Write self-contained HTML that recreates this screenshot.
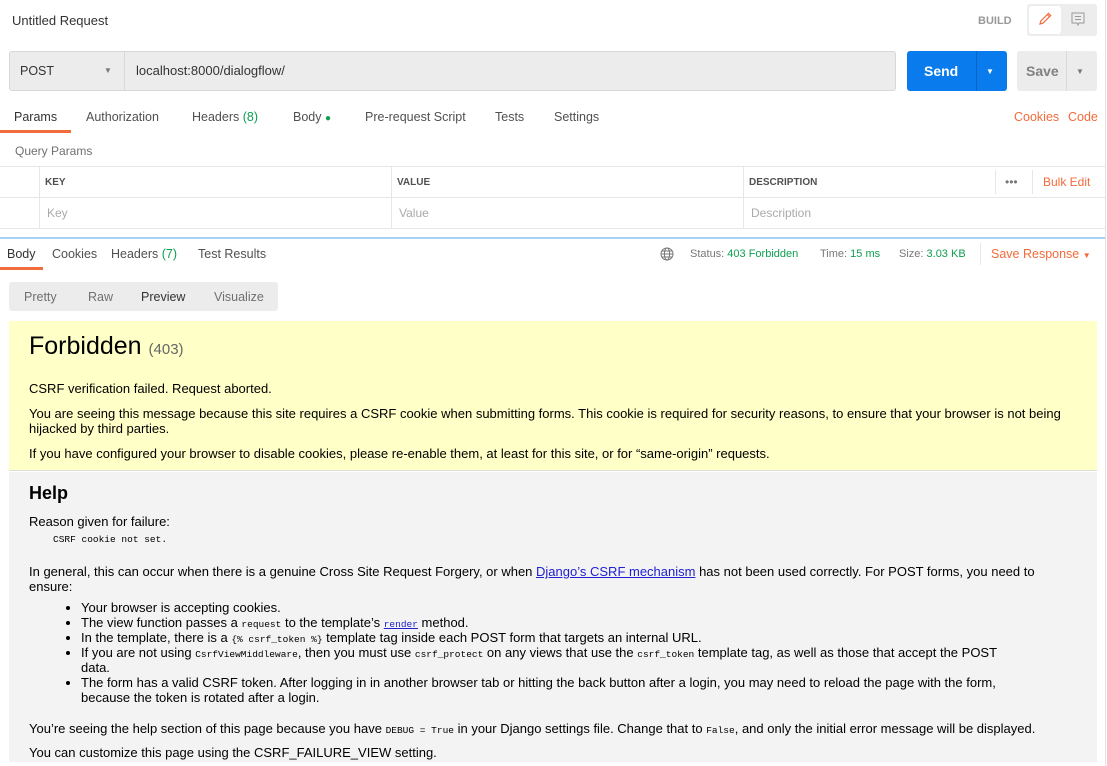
<!DOCTYPE html>
<html><head><style>
*{box-sizing:border-box;margin:0;padding:0}
body{width:1107px;height:766px;overflow:hidden;background:#fff;font-family:"Liberation Sans",sans-serif;font-size:12px;color:#505050;position:relative}
.a{position:absolute;white-space:nowrap}
.or{color:#f26b3a}
.gr{color:#0c9f4f}
.dj{font-family:"Liberation Sans",Arial,sans-serif;color:#000;font-size:13px}
code{font-family:"Liberation Mono",monospace;font-size:9.5px;line-height:0;vertical-align:baseline}
a{color:#2020d0;text-decoration:underline}
ul{list-style:disc;padding-left:52px}
li{line-height:15px;height:15px}
li.two{height:30px}
</style></head><body>
<div class="a" style="right:1px;top:0;width:1px;height:766px;background:#e2e2e2"></div>
<div class="a" style="left:12px;top:13px;font-size:13px;color:#333">Untitled Request</div>
<div class="a" style="left:978px;top:15px;font-size:11px;color:#999;font-weight:bold">BUILD</div>
<div class="a" style="left:1027px;top:4px;width:70px;height:32px;background:#ededed;border-radius:3px"></div>
<div class="a" style="left:1029px;top:6px;width:32px;height:28px;background:#fff;border-radius:3px"></div>
<svg class="a" style="left:1037px;top:11px" width="16" height="16" viewBox="0 0 16 16"><path d="M3 13 L3.8 10 L11.5 2.3 L13.7 4.5 L6 12.2 Z M10.3 3.5 L12.5 5.7" fill="none" stroke="#f26b3a" stroke-width="1.2"/></svg>
<svg class="a" style="left:1070px;top:11px" width="16" height="17" viewBox="0 0 16 17"><path d="M2 2h12v10H9l-1 2-1-2H2z M5 5.5h6 M5 8.5h6" fill="none" stroke="#999" stroke-width="1"/></svg>

<div class="a" style="left:9px;top:51px;width:887px;height:40px;background:#ececec;border:1px solid #d8d8d8;border-radius:3px"></div>
<div class="a" style="left:124px;top:52px;width:1px;height:38px;background:#d8d8d8"></div>
<div class="a" style="left:20px;top:64px;font-size:12.5px;color:#333">POST</div>
<div class="a" style="left:104px;top:66px;font-size:8px;color:#777">▼</div>
<div class="a" style="left:136px;top:63px;font-size:13px;color:#333">localhost:8000/dialogflow/</div>
<div class="a" style="left:907px;top:51px;width:100px;height:40px;background:#097bed;border-radius:3px"></div>
<div class="a" style="left:976px;top:51px;width:1px;height:40px;background:#0a66c5"></div>
<div class="a" style="left:924px;top:63px;font-size:14px;color:#fff;font-weight:bold">Send</div>
<div class="a" style="left:986px;top:67px;font-size:8px;color:#fff">▼</div>
<div class="a" style="left:1017px;top:51px;width:80px;height:40px;background:#ececec;border-radius:3px"></div>
<div class="a" style="left:1066px;top:51px;width:1px;height:40px;background:#d8d8d8"></div>
<div class="a" style="left:1026px;top:63px;font-size:14px;color:#808080;font-weight:bold">Save</div>
<div class="a" style="left:1076px;top:67px;font-size:8px;color:#777">▼</div>

<div class="a" style="left:14px;top:110px;color:#333;font-size:12.5px">Params</div>
<div class="a" style="left:0;top:130px;width:71px;height:3px;background:#f26b3a"></div>
<div class="a" style="left:86px;top:110px;font-size:12.5px">Authorization</div>
<div class="a" style="left:192px;top:110px;font-size:12.5px">Headers <span class="gr">(8)</span></div>
<div class="a" style="left:293px;top:110px;font-size:12.5px">Body <span class="gr" style="font-size:10px">●</span></div>
<div class="a" style="left:365px;top:110px;font-size:12.5px">Pre-request Script</div>
<div class="a" style="left:495px;top:110px;font-size:12.5px">Tests</div>
<div class="a" style="left:554px;top:110px;font-size:12.5px">Settings</div>
<div class="a or" style="left:1014px;top:110px;font-size:12.5px">Cookies</div>
<div class="a or" style="left:1068px;top:110px;font-size:12.5px">Code</div>

<div class="a" style="left:15px;top:144px;color:#707070">Query Params</div>
<div class="a" style="left:0;top:166px;width:1105px;height:1px;background:#e6e6e6"></div>
<div class="a" style="left:0;top:197px;width:1105px;height:1px;background:#e6e6e6"></div>
<div class="a" style="left:0;top:228px;width:1105px;height:1px;background:#e6e6e6"></div>
<div class="a" style="left:39px;top:166px;width:1px;height:62px;background:#e6e6e6"></div>
<div class="a" style="left:391px;top:166px;width:1px;height:62px;background:#e6e6e6"></div>
<div class="a" style="left:743px;top:166px;width:1px;height:62px;background:#e6e6e6"></div>
<div class="a" style="left:995px;top:170px;width:1px;height:24px;background:#e6e6e6"></div>
<div class="a" style="left:1032px;top:170px;width:1px;height:24px;background:#e6e6e6"></div>
<div class="a" style="left:45px;top:177px;font-size:10px;font-weight:bold;color:#505050">KEY</div>
<div class="a" style="left:397px;top:177px;font-size:10px;font-weight:bold;color:#505050">VALUE</div>
<div class="a" style="left:749px;top:177px;font-size:10px;font-weight:bold;color:#505050">DESCRIPTION</div>
<div class="a" style="left:1005px;top:175px;font-size:12px;color:#777">•••</div>
<div class="a or" style="left:1043px;top:175px">Bulk Edit</div>
<div class="a" style="left:47px;top:206px;color:#aaa">Key</div>
<div class="a" style="left:399px;top:206px;color:#aaa">Value</div>
<div class="a" style="left:751px;top:206px;color:#aaa">Description</div>

<div class="a" style="left:0;top:237px;width:1105px;height:2px;background:#a9d1f2"></div>
<div class="a" style="left:7px;top:247px;color:#333;font-size:12.5px">Body</div>
<div class="a" style="left:0;top:267px;width:43px;height:3px;background:#f26b3a"></div>
<div class="a" style="left:52px;top:247px;font-size:12.5px">Cookies</div>
<div class="a" style="left:111px;top:247px;font-size:12.5px">Headers <span class="gr">(7)</span></div>
<div class="a" style="left:198px;top:247px;font-size:12.5px">Test Results</div>
<svg class="a" style="left:660px;top:247px" width="14" height="14" viewBox="0 0 14 14"><g fill="none" stroke="#777" stroke-width="1"><circle cx="7" cy="7" r="6"/><ellipse cx="7" cy="7" rx="2.6" ry="6"/><path d="M1 7h12M2 4h10M2 10h10"/></g></svg>
<div class="a" style="left:690px;top:248px;font-size:11px;color:#777">Status: <span class="gr">403 Forbidden</span></div>
<div class="a" style="left:820px;top:248px;font-size:11px;color:#777">Time: <span class="gr">15 ms</span></div>
<div class="a" style="left:899px;top:248px;font-size:11px;color:#777">Size: <span class="gr">3.03 KB</span></div>
<div class="a" style="left:980px;top:243px;width:1px;height:22px;background:#e6e6e6"></div>
<div class="a or" style="left:991px;top:247px;font-size:12.5px">Save Response <span style="font-size:8px">▼</span></div>

<div class="a" style="left:9px;top:282px;width:269px;height:29px;background:#ececec;border-radius:3px"></div>
<div class="a" style="left:24px;top:290px;font-size:12.5px;color:#707070">Pretty</div>
<div class="a" style="left:88px;top:290px;font-size:12.5px;color:#707070">Raw</div>
<div class="a" style="left:141px;top:290px;font-size:12.5px;color:#333">Preview</div>
<div class="a" style="left:214px;top:290px;font-size:12.5px;color:#707070">Visualize</div>

<div class="a" style="left:9px;top:321px;width:1088px;height:150px;background:#ffffc8;border-bottom:1px solid #ddd"></div>
<div class="a dj" style="left:29px;top:332px;font-size:25px">Forbidden <span style="font-size:15px;color:#666">(403)</span></div>
<div class="a dj" style="left:29px;top:381px">CSRF verification failed. Request aborted.</div>
<div class="a dj" style="left:29px;top:406px;line-height:15px">You are seeing this message because this site requires a CSRF cookie when submitting forms. This cookie is required for security reasons, to ensure that your browser is not being<br>hijacked by third parties.</div>
<div class="a dj" style="left:29px;top:446px">If you have configured your browser to disable cookies, please re-enable them, at least for this site, or for “same-origin” requests.</div>

<div class="a" style="left:9px;top:472px;width:1088px;height:290px;background:#f3f3f3"></div>
<div class="a dj" style="left:29px;top:483px;font-size:18px;font-weight:bold">Help</div>
<div class="a dj" style="left:29px;top:514px">Reason given for failure:</div>
<div class="a dj" style="left:53px;top:530px"><code>CSRF cookie not set.</code></div>
<div class="a dj" style="left:29px;top:564px;line-height:15px">In general, this can occur when there is a genuine Cross Site Request Forgery, or when <a>Django’s CSRF mechanism</a> has not been used correctly. For POST forms, you need to<br>ensure:</div>
<div class="a dj" style="left:29px;top:600px">
<ul>
<li>Your browser is accepting cookies.</li>
<li>The view function passes a <code>request</code> to the template’s <a><code>render</code></a> method.</li>
<li>In the template, there is a <code>{% csrf_token %}</code> template tag inside each POST form that targets an internal URL.</li>
<li class="two">If you are not using <code>CsrfViewMiddleware</code>, then you must use <code>csrf_protect</code> on any views that use the <code>csrf_token</code> template tag, as well as those that accept the POST<br>data.</li>
<li class="two">The form has a valid CSRF token. After logging in in another browser tab or hitting the back button after a login, you may need to reload the page with the form,<br>because the token is rotated after a login.</li>
</ul></div>
<div class="a dj" style="left:29px;top:721px">You’re seeing the help section of this page because you have <code>DEBUG = True</code> in your Django settings file. Change that to <code>False</code>, and only the initial error message will be displayed.</div>
<div class="a dj" style="left:29px;top:745px">You can customize this page using the CSRF_FAILURE_VIEW setting.</div>
<div class="a" style="left:0;top:762px;width:1105px;height:4px;background:#fff"></div>
</body></html>
